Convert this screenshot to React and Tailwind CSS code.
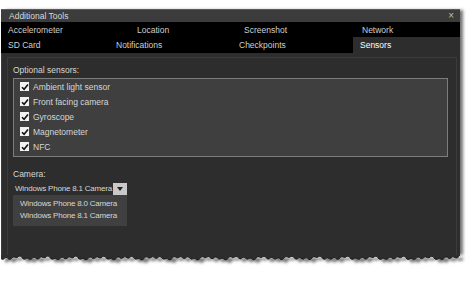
import React from 'react';

const font = "font-['Liberation_Sans','Arial',sans-serif]";

const row1 = [
  { label: 'Accelerometer', w: 'w-[129px]' },
  { label: 'Location', w: 'w-[107px]' },
  { label: 'Screenshot', w: 'w-[118px]' },
  { label: 'Network', w: 'flex-1' },
];

const row2 = [
  { label: 'SD Card', w: 'w-[108px]' },
  { label: 'Notifications', w: 'w-[123px]' },
  { label: 'Checkpoints', w: 'w-[121px]' },
  { label: 'Sensors', w: 'flex-1', active: true },
];

const sensors = ['Ambient light sensor', 'Front facing camera', 'Gyroscope', 'Magnetometer', 'NFC'];

// torn paper edge along the bottom of the window
function tornPoints(width) {
  const pts = [];
  for (let x = 0; x <= width; x += 2) {
    const y = 3 + Math.sin(x * 0.9) * 1.1 + Math.sin(x * 0.23 + 1) * 0.9 + Math.sin(x * 2.7) * 0.6;
    pts.push(`${x},${y.toFixed(1)}`);
  }
  return pts;
}

function TornEdge() {
  const w = 459;
  const pts = tornPoints(w);
  const shape = `0,0 ${w},0 ${pts.slice().reverse().join(' ')}`;
  return (
    <svg width="468" height="14" className="block">
      <defs>
        <filter id="blur" x="-5%" y="-50%" width="110%" height="200%">
          <feGaussianBlur stdDeviation="1.4" />
        </filter>
      </defs>
      <polygon points={shape} transform="translate(4,3)" fill="#6b6b6b" filter="url(#blur)" />
      <polygon points={shape} fill="#2d2d2d" />
      <polyline points={pts.join(' ')} fill="none" stroke="#111" strokeWidth="0.8" />
    </svg>
  );
}

function Check() {
  return (
    <span className="w-[9px] h-[9px] bg-[#f2f2f2] flex items-center justify-center">
      <svg width="8" height="8" viewBox="0 0 8 8">
        <path d="M1 4.2 L3.1 6.3 L7 1.6" fill="none" stroke="#111" strokeWidth="1.6" />
      </svg>
    </span>
  );
}

export default function App() {
  return (
    <div className={`w-[474px] h-[286px] bg-white overflow-hidden pt-[9px] pl-[1px] ${font} text-[8.5px] leading-[10px] whitespace-nowrap`}>
      <div className="w-[459px] shadow-[4px_0_3px_-1px_rgba(0,0,0,0.55)]">
        {/* title bar */}
        <div className="h-[13px] bg-[#3c3c3c] border-t border-[#5a5a5a] flex items-center justify-between pl-[8px] pr-[6px] text-[#d8d8d8]">
          <span>Additional Tools</span>
          <span className="text-[10px] leading-[10px] text-[#bdbdbd]">×</span>
        </div>

        {/* tabs */}
        <div className="bg-black">
          <div className="h-[15px] flex items-center text-[#cfcfcf]">
            {row1.map((t) => (
              <div key={t.label} className={`${t.w} h-full flex items-center pl-[7px]`}>
                {t.label}
              </div>
            ))}
          </div>
          <div className="h-[16px] flex items-center text-[#cfcfcf]">
            {row2.map((t) => (
              <div
                key={t.label}
                className={`${t.w} h-full flex items-center pl-[7px] ${t.active ? 'bg-[#2d2d2d] text-white' : ''}`}
              >
                {t.label}
              </div>
            ))}
          </div>
        </div>

        {/* content */}
        <div className="h-[203px] bg-[#2d2d2d] border-l border-[#3d3d3d] pt-[4px] pl-[5px] pr-[3px] overflow-hidden">
          <div className="h-[210px] border border-[#3b3b3b] pl-[5px] pr-[8px] pt-[7px] text-[#d6d6d6]">
            <div>Optional sensors:</div>
            <div className="mt-[3px] h-[79px] border border-[#7c7c7c] bg-[#3f3f3f] pl-[6px]">
              {sensors.map((s) => (
                <div key={s} className="h-[15px] flex items-center gap-[4px]">
                  <Check />
                  <span>{s}</span>
                </div>
              ))}
            </div>

            <div className="mt-[12px]">Camera:</div>
            <div className="mt-[3px] w-[114px] h-[13px] flex items-center text-[8px] tracking-[-0.2px]">
              <span className="flex-1 pl-[2px]">Windows Phone 8.1 Camera</span>
              <span className="shrink-0 w-[14px] h-[12px] bg-[#c9c9c9] flex items-center justify-center">
                <svg width="6" height="4" viewBox="0 0 6 4">
                  <path d="M0 0 H6 L3 4 Z" fill="#222" />
                </svg>
              </span>
            </div>
            <div className="w-[114px] h-[31px] bg-[#404040] pt-[3px] pl-[7px] text-[8px] tracking-[-0.2px]">
              <div className="h-[12px] flex items-center">Windows Phone 8.0 Camera</div>
              <div className="h-[12px] flex items-center">Windows Phone 8.1 Camera</div>
            </div>
          </div>
        </div>
      </div>
      <div className="-mt-[1px]">
        <TornEdge />
      </div>
    </div>
  );
}
